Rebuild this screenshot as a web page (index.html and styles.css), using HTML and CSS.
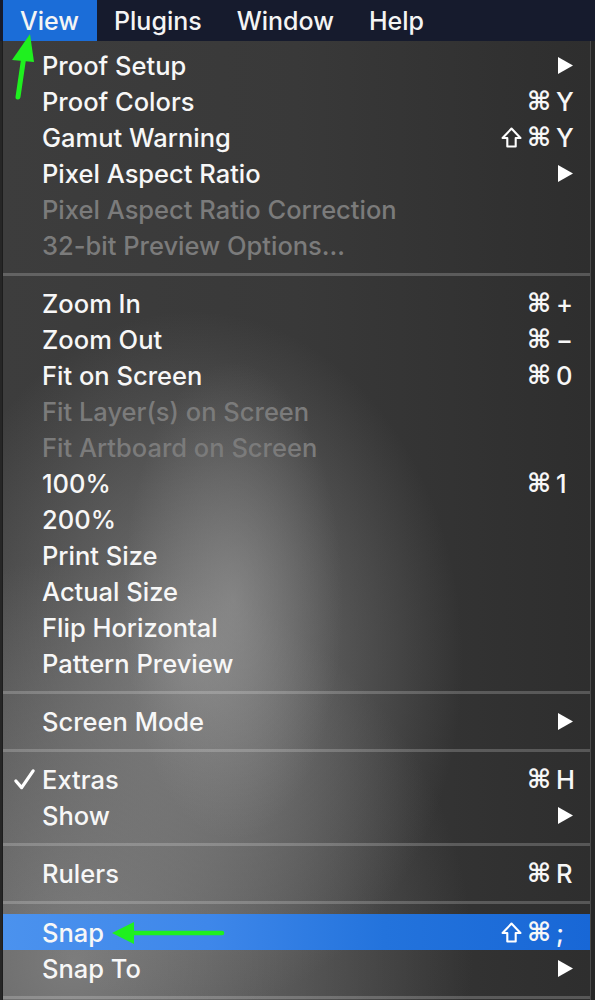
FILE: index.html
```html
<!DOCTYPE html>
<html>
<head>
<meta charset="utf-8">
<link rel="stylesheet" href="styles.css">
</head>
<body>
<div class="page">
  <nav class="menubar">
    <span class="mb-item active">View</span>
    <span class="mb-item">Plugins</span>
    <span class="mb-item">Window</span>
    <span class="mb-item">Help</span>
  </nav>
  <div class="menu">
    <div class="row"><span class="chk"></span><span class="label">Proof Setup</span><span class="mods"></span><span class="key"><svg class="tri" viewBox="0 0 15 17"><polygon points="0,0 15,8.5 0,17" fill="#fff"/></svg></span></div>
    <div class="row"><span class="chk"></span><span class="label">Proof Colors</span><span class="mods"><span class="cmd">⌘</span></span><span class="key">Y</span></div>
    <div class="row"><span class="chk"></span><span class="label">Gamut Warning</span><span class="mods"><svg class="shift" viewBox="0 0 20 20"><path d="M10 1.5 L18.5 10.5 H14 V18.5 H6 V10.5 H1.5 Z" fill="none" stroke="#fff" stroke-width="2" stroke-linejoin="round"/></svg><span class="cmd">⌘</span></span><span class="key">Y</span></div>
    <div class="row"><span class="chk"></span><span class="label">Pixel Aspect Ratio</span><span class="mods"></span><span class="key"><svg class="tri" viewBox="0 0 15 17"><polygon points="0,0 15,8.5 0,17" fill="#fff"/></svg></span></div>
    <div class="row dim"><span class="chk"></span><span class="label">Pixel Aspect Ratio Correction</span><span class="mods"></span><span class="key"></span></div>
    <div class="row dim"><span class="chk"></span><span class="label">32-bit Preview Options...</span><span class="mods"></span><span class="key"></span></div>
    <div class="sep"></div>
    <div class="row"><span class="chk"></span><span class="label">Zoom In</span><span class="mods"><span class="cmd">⌘</span></span><span class="key">+</span></div>
    <div class="row"><span class="chk"></span><span class="label">Zoom Out</span><span class="mods"><span class="cmd">⌘</span></span><span class="key">−</span></div>
    <div class="row"><span class="chk"></span><span class="label">Fit on Screen</span><span class="mods"><span class="cmd">⌘</span></span><span class="key">0</span></div>
    <div class="row dim"><span class="chk"></span><span class="label">Fit Layer(s) on Screen</span><span class="mods"></span><span class="key"></span></div>
    <div class="row dim"><span class="chk"></span><span class="label">Fit Artboard on Screen</span><span class="mods"></span><span class="key"></span></div>
    <div class="row"><span class="chk"></span><span class="label">100%</span><span class="mods"><span class="cmd">⌘</span></span><span class="key">1</span></div>
    <div class="row"><span class="chk"></span><span class="label">200%</span><span class="mods"></span><span class="key"></span></div>
    <div class="row"><span class="chk"></span><span class="label">Print Size</span><span class="mods"></span><span class="key"></span></div>
    <div class="row"><span class="chk"></span><span class="label">Actual Size</span><span class="mods"></span><span class="key"></span></div>
    <div class="row"><span class="chk"></span><span class="label">Flip Horizontal</span><span class="mods"></span><span class="key"></span></div>
    <div class="row"><span class="chk"></span><span class="label">Pattern Preview</span><span class="mods"></span><span class="key"></span></div>
    <div class="sep"></div>
    <div class="row"><span class="chk"></span><span class="label">Screen Mode</span><span class="mods"></span><span class="key"><svg class="tri" viewBox="0 0 15 17"><polygon points="0,0 15,8.5 0,17" fill="#fff"/></svg></span></div>
    <div class="sep"></div>
    <div class="row"><span class="chk"><svg viewBox="0 0 24 24" class="check"><path d="M3 13.5 L9 20.5 L21 3" fill="none" stroke="#fff" stroke-width="3.4" stroke-linecap="round" stroke-linejoin="round"/></svg></span><span class="label">Extras</span><span class="mods"><span class="cmd">⌘</span></span><span class="key">H</span></div>
    <div class="row"><span class="chk"></span><span class="label">Show</span><span class="mods"></span><span class="key"><svg class="tri" viewBox="0 0 15 17"><polygon points="0,0 15,8.5 0,17" fill="#fff"/></svg></span></div>
    <div class="sep"></div>
    <div class="row"><span class="chk"></span><span class="label">Rulers</span><span class="mods"><span class="cmd">⌘</span></span><span class="key">R</span></div>
    <div class="sep sep-tall"></div>
    <div class="row selected"><span class="chk"></span><span class="label">Snap</span><span class="mods"><svg class="shift" viewBox="0 0 20 20"><path d="M10 1.5 L18.5 10.5 H14 V18.5 H6 V10.5 H1.5 Z" fill="none" stroke="#fff" stroke-width="2" stroke-linejoin="round"/></svg><span class="cmd">⌘</span></span><span class="key">;</span></div>
    <div class="row"><span class="chk"></span><span class="label">Snap To</span><span class="mods"></span><span class="key"><svg class="tri" viewBox="0 0 15 17"><polygon points="0,0 15,8.5 0,17" fill="#fff"/></svg></span></div>
    <div class="sep"></div>
  </div>
  <svg class="arrow arrow-up" width="60" height="110" viewBox="0 0 60 110">
    <path d="M18 97 L24 56" stroke="#1ff01f" stroke-width="5" stroke-linecap="round"/>
    <polygon points="30,34 12,60 34,62" fill="#1ff01f"/>
  </svg>
  <svg class="arrow arrow-left" width="130" height="30" viewBox="0 0 130 30">
    <path d="M20 15 L110 15" stroke="#1ff01f" stroke-width="4.5" stroke-linecap="round"/>
    <polygon points="0,15 22,4 22,26" fill="#1ff01f"/>
  </svg>
</div>
</body>
</html>
```

FILE: styles.css
```css
html, body {
  margin: 0;
  padding: 0;
}
body {
  background: #262626;
  width: 595px;
  height: 1000px;
  overflow: hidden;
  font-family: "Inter", "Liberation Sans", sans-serif;
  color: #f7f7f7;
}
.page {
  position: relative;
  display: flex;
  flex-direction: column;
  height: 1000px;
}
.menubar {
  height: 41px;
  flex-shrink: 0;
  background: #161b2d;
  display: flex;
  align-items: stretch;
  padding-left: 3px;
}
.mb-item {
  display: flex;
  align-items: center;
  padding: 0 18px 0 17px;
  font-size: 25px;
  font-weight: 500;
  color: #f4f4f4;
}
.mb-item.active {
  background: #1b6dd8;
}
.menu {
  margin-left: 2px;
  width: 587px;
  flex: 1;
  border-left: 1px solid #1d1d1d;
  border-right: 1px solid #4a4a4a;
  padding-top: 6px;
  background:
    radial-gradient(ellipse 110px 240px at 230px 560px, rgba(175,175,175,0.38), rgba(175,175,175,0) 100%),
    radial-gradient(ellipse 270px 350px at 190px 620px, rgba(150,150,150,0.68), rgba(150,150,150,0) 100%),
    radial-gradient(ellipse 400px 400px at 70px 920px, rgba(135,135,135,0.85), rgba(135,135,135,0) 100%),
    linear-gradient(to right, #3d3d3d 0%, #393939 50%, #313131 85%, #2e2e2e 100%);
}
.row {
  height: 36px;
  display: grid;
  grid-template-columns: 39px 1fr auto 24px;
  align-items: center;
  padding-right: 10px;
  font-size: 25.5px;
  font-weight: 500;
}
.row.dim {
  color: #7b7b7b;
}
.row.selected {
  background: linear-gradient(to right, #4b92ee 0%, #3e87ea 35%, #2373dc 65%, #1867d6 100%);
}
.chk {
  display: flex;
  align-items: center;
  justify-content: center;
  padding-left: 4px;
}
.check {
  width: 23px;
  height: 23px;
}
.label {
  white-space: nowrap;
}
.mods {
  display: flex;
  align-items: center;
  gap: 5px;
  padding-right: 5px;
}
.cmd {
  font-family: "DejaVu Sans", sans-serif;
  font-size: 26px;
  font-weight: bold;
  line-height: 1;
}
.shift {
  width: 21px;
  height: 21px;
}
.key {
  display: flex;
  align-items: center;
  font-size: 25.5px;
}
.tri {
  width: 15px;
  height: 17px;
  margin-left: 2px;
}
.sep {
  height: 22px;
  display: flex;
  align-items: center;
}
.sep-tall {
  height: 23px;
}
.sep::before {
  content: "";
  display: block;
  width: 100%;
  height: 3px;
  background: rgba(255,255,255,0.2);
}
.arrow {
  position: absolute;
}
.arrow-up {
  left: 0;
  top: 0;
}
.arrow-left {
  left: 112px;
  top: 918px;
}
```
